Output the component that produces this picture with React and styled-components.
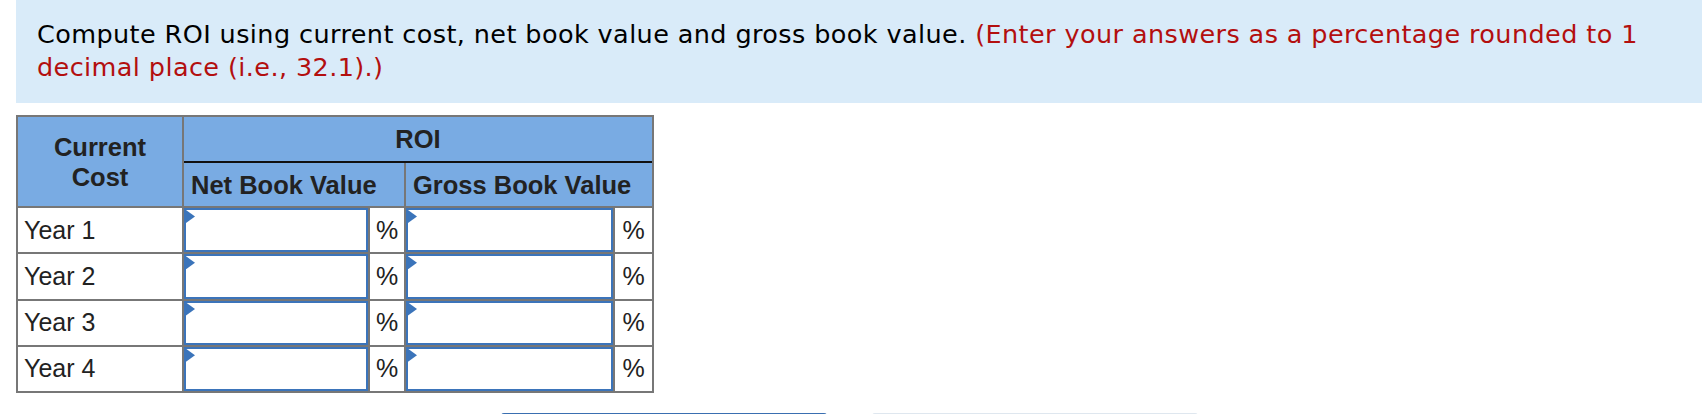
import React from 'react';
import styled, { createGlobalStyle } from 'styled-components';

const GlobalStyle = createGlobalStyle`
  html, body { margin: 0; padding: 0; background: #ffffff; }
  body { overflow: hidden; }
  *, *::before, *::after { box-sizing: border-box; }
`;

const Page = styled.div`
  width: 1702px;
  height: 414px;
  padding-left: 16px;
  overflow: hidden;
`;

const Prompt = styled.div`
  background: #d9ebf9;
  padding: 18px 40px 19px 21px;
  font-family: "DejaVu Sans", Verdana, sans-serif;
  font-size: 25.5px;
  line-height: 33px;
  letter-spacing: 0.4px;
  color: #000000;
`;

const Hint = styled.span`
  color: #b30f0f;
`;

const Grid = styled.div`
  margin-top: 12px;
  display: grid;
  width: max-content;
  grid-template-columns: 164px 184px 34px 207px 37px;
  grid-template-rows: 44px 43px repeat(4, 44.25px);
  gap: 2px;
  padding: 2px;
  background: #777777;
  font-family: "Liberation Sans", Arial, sans-serif;
  color: #222222;
`;

const HeadCell = styled.div`
  background: #79abe3;
  font-weight: bold;
  font-size: 25.5px;
  display: flex;
  align-items: center;
  justify-content: ${(p) => (p.$left ? 'flex-start' : 'center')};
  padding-left: ${(p) => (p.$left ? '7px' : '0')};
  text-align: center;
  line-height: 30px;
  grid-row: ${(p) => p.$row || 'auto'};
  grid-column: ${(p) => p.$col || 'auto'};
`;

const RoiCell = styled(HeadCell)`
  border-bottom: 2px solid #111111;
  margin-bottom: -2px;
  position: relative;
`;

const LabelCell = styled.div`
  background: #ffffff;
  display: flex;
  align-items: center;
  padding-left: 6px;
  font-size: 25px;
`;

const InputCell = styled.div`
  position: relative;
  background: #ffffff;
  display: flex;
`;

const AnswerInput = styled.input`
  width: 100%;
  height: 100%;
  margin: 0;
  padding: 0 8px;
  border: 2px solid #3b74ba;
  background: #ffffff;
  font-family: "Liberation Sans", Arial, sans-serif;
  font-size: 24px;
  outline: none;
`;

const Marker = styled.span`
  position: absolute;
  top: 2px;
  left: 2px;
  width: 9px;
  height: 13px;
  background: #3b74ba;
  clip-path: polygon(0 0, 100% 50%, 0 100%);
  pointer-events: none;
`;

const PercentCell = styled.div`
  background: #ffffff;
  display: flex;
  align-items: center;
  justify-content: center;
  font-size: 25px;
`;

const ButtonRow = styled.div`
  display: flex;
  justify-content: center;
  gap: 45px;
  margin-top: 20px;
  padding-right: 19px;
`;

const NavButton = styled.div`
  width: 326px;
  height: 44px;
  border-radius: 3px;
  background: ${(p) => (p.$primary ? '#3a6fb1' : '#dfe7ef')};
`;

const years = ['Year 1', 'Year 2', 'Year 3', 'Year 4'];

function AnswerField() {
  return (
    <InputCell>
      <AnswerInput type="text" />
      <Marker />
    </InputCell>
  );
}

export default function App() {
  return (
    <>
      <GlobalStyle />
      <Page>
        <Prompt>
          Compute ROI using current cost, net book value and gross book value.{' '}
          <Hint>(Enter your answers as a percentage rounded to 1 decimal place (i.e., 32.1).)</Hint>
        </Prompt>
        <Grid>
          <HeadCell $row="1 / span 2">
            Current
            <br />
            Cost
          </HeadCell>
          <RoiCell $col="2 / span 4">ROI</RoiCell>
          <HeadCell $left $col="span 2">Net Book Value</HeadCell>
          <HeadCell $left $col="span 2">Gross Book Value</HeadCell>
          {years.map((y) => (
            <React.Fragment key={y}>
              <LabelCell>{y}</LabelCell>
              <AnswerField />
              <PercentCell>%</PercentCell>
              <AnswerField />
              <PercentCell>%</PercentCell>
            </React.Fragment>
          ))}
        </Grid>
        <ButtonRow>
          <NavButton $primary />
          <NavButton />
        </ButtonRow>
      </Page>
    </>
  );
}
